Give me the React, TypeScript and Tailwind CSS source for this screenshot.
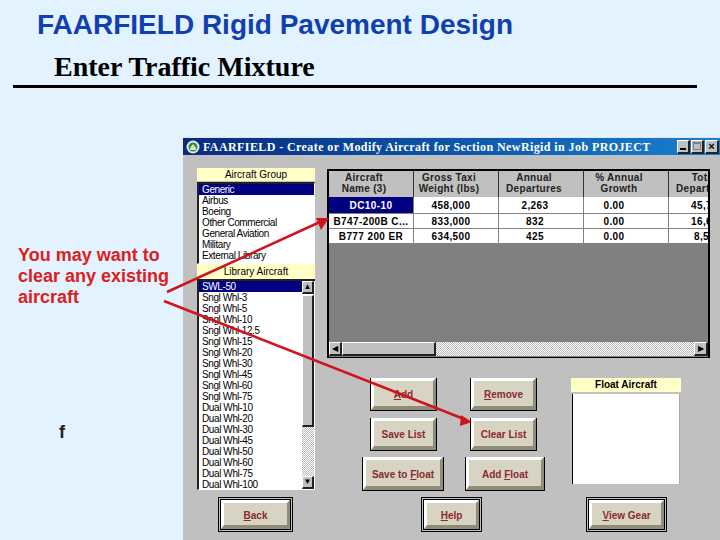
import type { ReactNode } from 'react';

const groups = ['Generic', 'Airbus', 'Boeing', 'Other Commercial', 'General Aviation', 'Military', 'External Library'];
const library = [
  'SWL-50', 'Sngl Whl-3', 'Sngl Whl-5', 'Sngl Whl-10', 'Sngl Whl-12.5', 'Sngl Whl-15', 'Sngl Whl-20', 'Sngl Whl-30', 'Sngl Whl-45',
  'Sngl Whl-60', 'Sngl Whl-75', 'Dual Whl-10', 'Dual Whl-20', 'Dual Whl-30', 'Dual Whl-45', 'Dual Whl-50', 'Dual Whl-60', 'Dual Whl-75', 'Dual Whl-100',
];
const rows = [
  ['DC10-10', '458,000', '2,263', '0.00', '45,720'],
  ['B747-200B C...', '833,000', '832', '0.00', '16,640'],
  ['B777 200 ER', '634,500', '425', '0.00', '8,500'],
];
const headers = [
  ['Aircraft', 'Name (3)'],
  ['Gross Taxi', 'Weight (lbs)'],
  ['Annual', 'Departures'],
  ['% Annual', 'Growth'],
  ['Total', 'Departures'],
];
// values sit left of the column centre in the original grid
const cellPad = ['', 'pr-[10px]', 'pr-[12px]', 'pr-[24px]', 'pr-[7px]'];
const dither = 'bg-[repeating-conic-gradient(#ffffff_0_25%,#b8b8b8_0_50%)] bg-[length:2px_2px]';

function Label({ children, className = '' }: { children: ReactNode; className?: string }) {
  return <div className={`bg-[#ffffc8] text-center text-[10px] leading-[13px] text-black ${className}`}>{children}</div>;
}

function SmallBtn({ children, className = '' }: { children?: ReactNode; className?: string }) {
  return (
    <div className={`flex items-center justify-center border-t border-l border-white border-r-[2px] border-b-[2px] border-r-[#222] border-b-[#222] bg-[#c0c0c0] text-[8px] leading-none text-black ${className}`}>
      {children}
    </div>
  );
}

function Btn({ label, width, height = 33, framed = false }: { label: ReactNode; width: number; height?: number; framed?: boolean }) {
  return (
    <div
      className={framed ? 'border border-black p-px bg-[#c0c0c0]' : 'border-x border-b border-black border-t-[#999] bg-white'}
      style={{ width, height }}
    >
      <div className={`h-full ${framed ? 'border border-black' : ''}`}>
        <div className="flex h-full items-center justify-center border-t-[3px] border-l-[3px] border-r-[3px] border-b-[4px] border-t-white border-l-white border-r-[#8f8d78] border-b-[#8f8d78] bg-[#d8d4c4] pt-[2px] text-[10px] font-bold text-[#8a2a2e]">
          <span className="whitespace-nowrap">{label}</span>
        </div>
      </div>
    </div>
  );
}

export default function App() {
  return (
    <div className="relative h-[540px] w-[720px] overflow-hidden bg-[#e2f2fe] font-['Liberation_Sans',sans-serif]">
      <h1 className="pl-[37px] pt-[9px] text-[28px] font-bold leading-[32px] text-[#1040b0]">FAARFIELD Rigid Pavement Design</h1>
      <h2 className="mt-[10px] pl-[54px] font-['Liberation_Serif',serif] text-[28px] font-bold leading-[32px] text-black">Enter Traffic Mixture</h2>
      <div className="ml-[13px] mt-[2px] h-[3px] w-[684px] bg-black" />

      <div className="mt-[49px] flex">
        <div className="w-[183px] shrink-0 pl-[18px] pt-[108px] text-[18px] font-bold leading-[21px] text-[#dc2020]">
          <p>You may want to<br />clear any existing<br />aircraft</p>
          <p className="ml-[41px] mt-[114px] text-[#222]">f</p>
        </div>

        {/* FAARFIELD dialog */}
        <div className="h-[403px] w-[537px] overflow-hidden border-t border-[#dfe8f0] bg-[#c0c0c0]">
          <div className="flex h-[17px] items-center bg-gradient-to-r from-[#0a2a80] to-[#1a80d0] pl-[3px] pr-px">
            <svg width="14" height="14" viewBox="0 0 14 14" className="shrink-0">
              <circle cx="7" cy="7" r="6.5" fill="#e8e8e8" />
              <circle cx="7" cy="7" r="4.5" fill="#2f8f3a" />
              <path d="M4 8 7 4l3 4v2H4z" fill="#cfe8c0" />
            </svg>
            <span className="ml-[3px] whitespace-nowrap font-['Liberation_Serif',serif] text-[12px] font-bold leading-none tracking-[0.41px] text-white">
              FAARFIELD - Create or Modify Aircraft for Section NewRigid in Job PROJECT
            </span>
            <div className="ml-auto flex gap-px">
              <SmallBtn className="h-[14px] w-[13px]"><span className="mt-[6px] h-[2px] w-[6px] bg-black" /></SmallBtn>
              <SmallBtn className="h-[14px] w-[13px]"><span className="h-[8px] w-[8px] border border-[#808080] border-t-2" /></SmallBtn>
              <SmallBtn className="h-[14px] w-[14px] font-bold !text-[11px]">×</SmallBtn>
            </div>
          </div>

          <div className="flex pl-[14px] pt-[13px]">
            {/* left lists */}
            <div className="w-[118px] shrink-0">
              <Label>Aircraft Group</Label>
              <div className="mt-px h-[82px] overflow-hidden border-l-2 border-t-2 border-r border-b border-l-[#222] border-t-[#222] border-r-white border-b-white bg-white text-[10px] leading-[11px] tracking-[-0.4px] text-black">
                {groups.map((g, i) => (
                  <div key={g} className={`h-[11px] whitespace-nowrap pl-[3px] ${i === 0 ? 'bg-[#000080] text-white' : ''}`}>{g}</div>
                ))}
              </div>
              <Label className="h-[15px] leading-[15px]">Library Aircraft</Label>
              <div className="flex h-[211px] border-l-2 border-t-2 border-b border-l-[#222] border-t-[#222] border-b-white bg-white">
                <div className="min-w-0 flex-1 overflow-hidden text-[10px] leading-[11px] tracking-[-0.4px] text-black">
                  {library.map((g, i) => (
                    <div key={g} className={`h-[11px] whitespace-nowrap pl-[3px] ${i === 0 ? 'bg-[#000080] text-white' : ''}`}>{g}</div>
                  ))}
                </div>
                <div className="flex w-[13px] shrink-0 flex-col border-r border-r-white">
                  <SmallBtn className="h-[13px] w-full">▲</SmallBtn>
                  <SmallBtn className="mt-px h-[132px] w-full" />
                  <div className={`flex-1 ${dither}`} />
                  <SmallBtn className="h-[13px] w-full">▼</SmallBtn>
                </div>
              </div>
              <div className="ml-[21px] mt-[7px]">
                <Btn framed width={75} height={35} label={<><u>B</u>ack</>} />
              </div>
            </div>

            {/* right side */}
            <div className="ml-[12px] w-[383px] shrink-0 pt-px">
              <div className="h-[189px] overflow-hidden border-x-2 border-t-2 border-b border-black bg-[#808080]">
                <div className="flex h-[171px] flex-col overflow-hidden">
                  <div className="grid w-[425px] grid-cols-[85px_85px_85px_85px_85px]">
                    {headers.map((h) => (
                      <div key={h[0]} className="h-[26px] border-r border-r-[#333] bg-[#c0c0c0] pr-[14px] pt-[1px] text-center text-[10px] font-bold leading-[11px] tracking-[0.3px] text-[#222]">
                        {h[0]}<br />{h[1]}
                      </div>
                    ))}
                    {rows.map((row, r) =>
                      row.map((c, i) => (
                        <div
                          key={`${r}-${i}`}
                          className={`flex items-center justify-center whitespace-nowrap border-b border-r border-[#808080] text-[10px] font-bold tracking-[0.4px] ${cellPad[i]} ${r === 0 ? 'h-[17px]' : 'h-[15px]'} ${r === 0 && i === 0 ? 'bg-[#000080] text-white' : 'bg-white text-black'}`}
                        >
                          {c}
                        </div>
                      )),
                    )}
                  </div>
                </div>
                <div className="flex h-[14px]">
                  <SmallBtn className="w-[13px] shrink-0">◀</SmallBtn>
                  <SmallBtn className="w-[94px] shrink-0" />
                  <div className={`flex-1 ${dither}`} />
                  <SmallBtn className="w-[14px] shrink-0">▶</SmallBtn>
                </div>
              </div>

              <div className="mt-[20px] flex">
                <div className="w-[244px] shrink-0">
                  <div className="flex gap-[33px] pl-[43px]">
                    <Btn width={67} label={<><u>A</u>dd</>} />
                    <Btn width={67} label={<><u>R</u>emove</>} />
                  </div>
                  <div className="mt-[7px] flex gap-[33px] pl-[43px]">
                    <Btn width={67} label="Save List" />
                    <Btn width={67} label="Clear List" />
                  </div>
                  <div className="mt-[6px] flex gap-[21px] pl-[35px]">
                    <Btn width={82} height={34} label={<>Save to <u>F</u>loat</>} />
                    <Btn width={80} height={34} label={<>Add <u>F</u>loat</>} />
                  </div>
                </div>
                <div className="w-[110px] shrink-0">
                  <Label className="h-[14px] font-bold leading-[14px]">Float Aircraft</Label>
                  <div className="ml-px mt-[2px] h-[90px] w-[108px] border-l border-r border-l-black border-r-[#aaa] bg-white" />
                </div>
              </div>

              <div className="mt-[6px] flex gap-[104px] pl-[94px]">
                <Btn framed width={61} height={35} label={<><u>H</u>elp</>} />
                <Btn framed width={81} height={35} label={<><u>V</u>iew Gear</>} />
              </div>
            </div>
          </div>
        </div>
      </div>

      {/* callout arrows */}
      <svg className="absolute left-0 top-0" width="720" height="540" viewBox="0 0 720 540">
        <path d="M167 292 320 222" stroke="#d0141e" strokeWidth="2.5" fill="none" />
        <path d="M329 218 316 218 321 230z" fill="#d0141e" />
        <path d="M164 301 464 419" stroke="#d0141e" strokeWidth="2.5" fill="none" />
        <path d="M472 422 461 415 460 426z" fill="#d0141e" />
      </svg>
    </div>
  );
}
